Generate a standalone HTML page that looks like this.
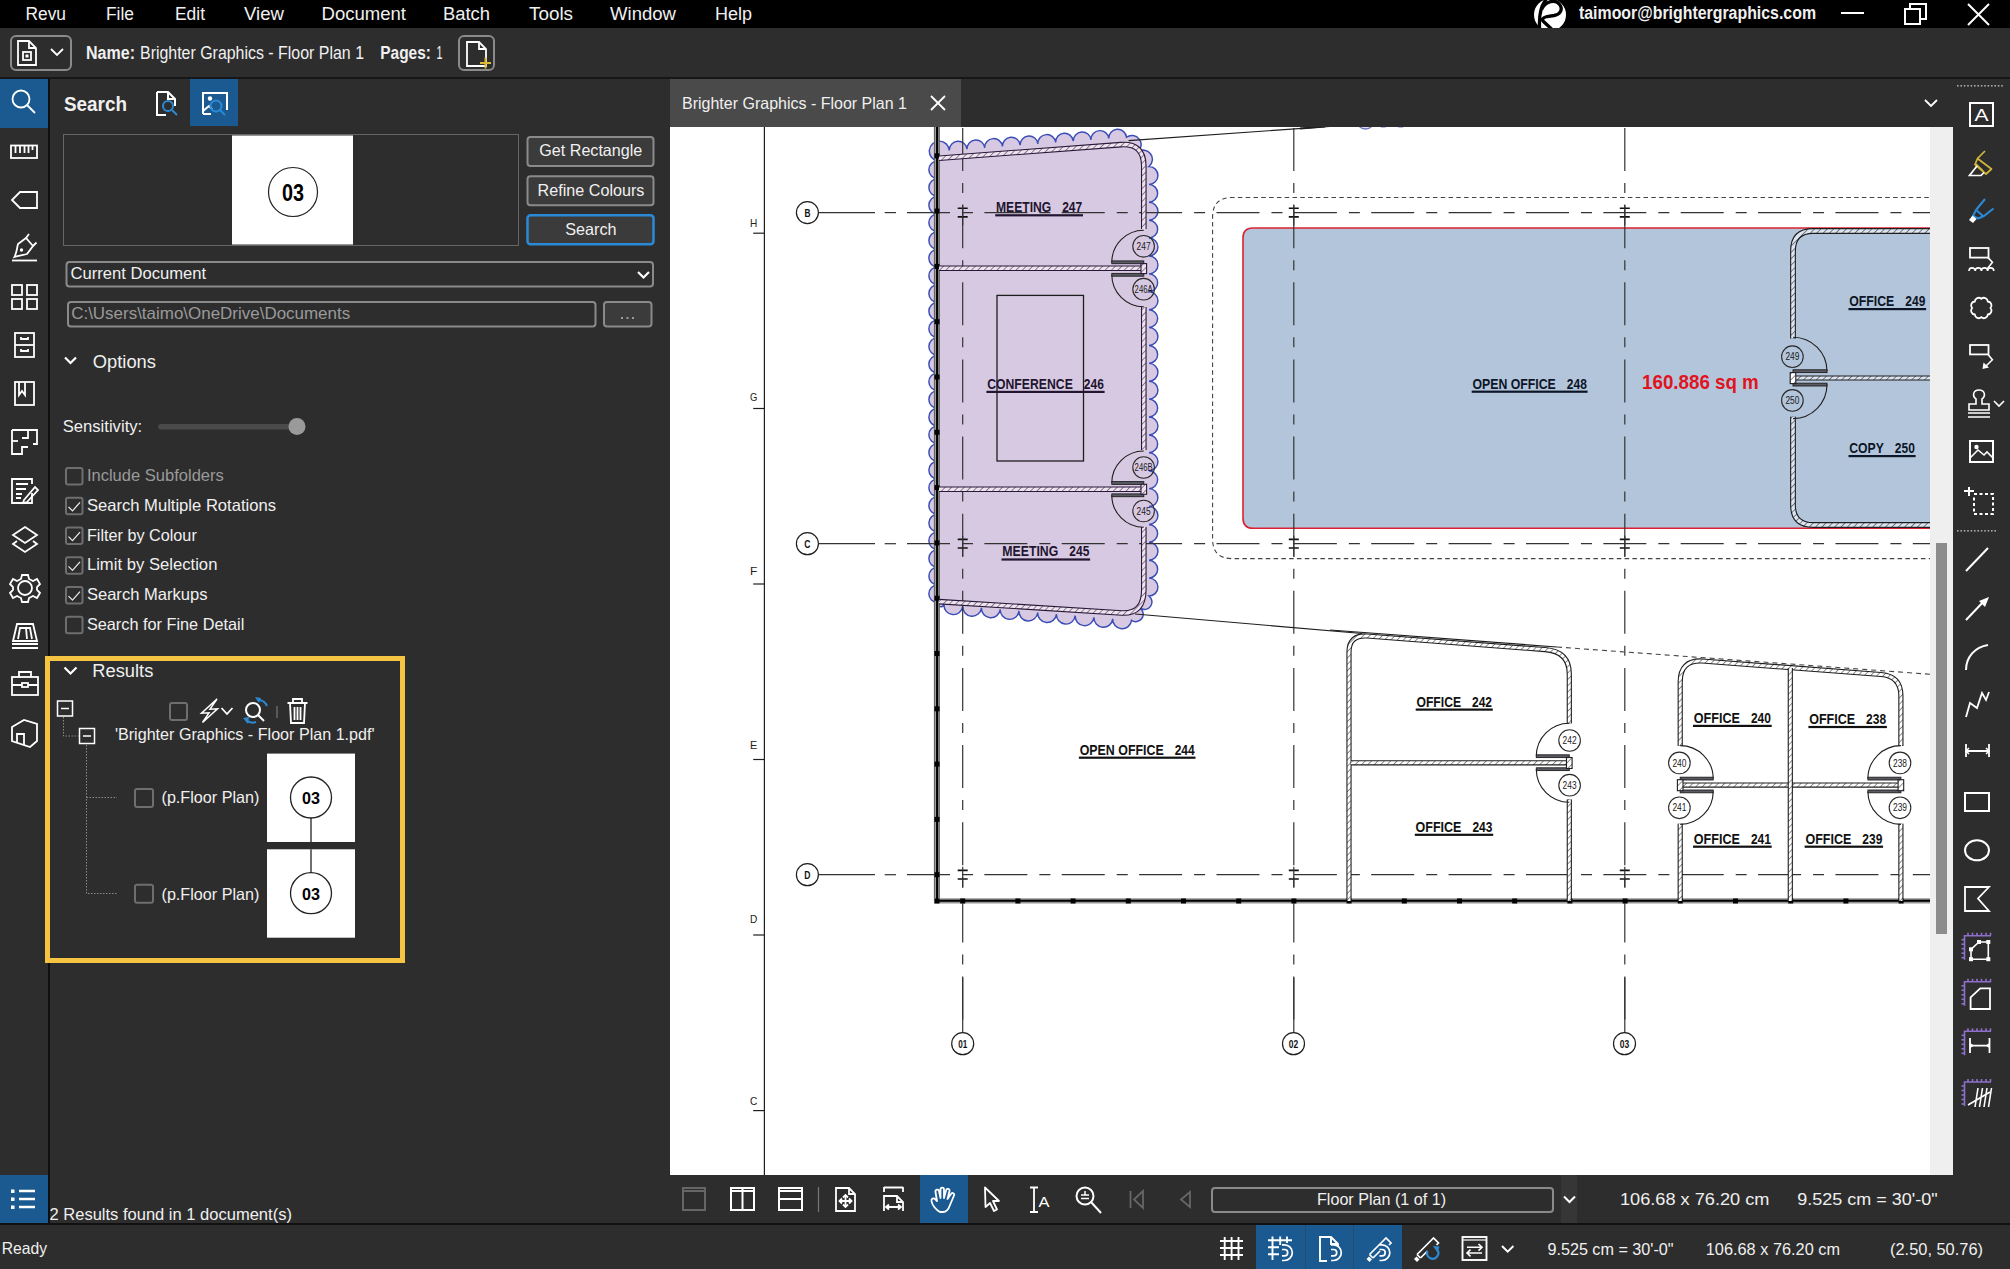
<!DOCTYPE html>
<html><head><meta charset="utf-8"><title>Revu</title><style>
*{margin:0;padding:0;box-sizing:border-box}
html,body{width:2010px;height:1269px;overflow:hidden;background:#2d2d2d;font-family:"Liberation Sans",sans-serif;color:#f0f0f0}
.a{position:absolute}
svg{position:absolute;left:0;top:0;overflow:visible}
text{font-family:"Liberation Sans",sans-serif}
#menubar{left:0;top:0;width:2010px;height:28px;background:#000}
#toolbar{left:0;top:28px;width:2010px;height:49px;background:#2d2d2d}
#sep1{left:0;top:77px;width:2010px;height:2px;background:#171717}
#leftrail{left:0;top:79px;width:48px;height:1144px;background:#2d2d2d}
#railsep{left:48px;top:79px;width:2px;height:1144px;background:#0f0f0f}
#panel{left:50px;top:79px;width:618px;height:1144px;background:#2d2d2d}
#panelsep{left:669px;top:79px;width:1px;height:1144px;background:#050505}
#docarea{left:669px;top:79px;width:1284px;height:1144px;background:#2d2d2d}
#tab{left:670px;top:79px;width:291px;height:48px;background:#4a4a4a}
#page{left:670px;top:127px;width:1260px;height:1048px;background:#fff;overflow:hidden}
#vtrack{left:1930px;top:127px;width:23px;height:1048px;background:#efefef}
#vthumb{left:1936px;top:543px;width:11px;height:391px;background:#8c8c8c}
#rightrail{left:1953px;top:79px;width:57px;height:1144px;background:#2d2d2d}
#statsep{left:0;top:1223px;width:2010px;height:2px;background:#111}
#status{left:0;top:1225px;width:2010px;height:44px;background:#2d2d2d}
.blue{background:#1b5a90}
</style></head><body>
<div id="menubar" class="a"></div>
<div id="toolbar" class="a"></div>
<div id="sep1" class="a"></div>
<div id="leftrail" class="a"></div>
<div id="railsep" class="a"></div>
<div id="panel" class="a"></div>
<div id="panelsep" class="a"></div>
<div id="docarea" class="a"></div>
<div id="tab" class="a"></div>
<div id="vtrack" class="a"></div>
<div id="rightrail" class="a"></div>
<div id="statsep" class="a"></div>
<div id="status" class="a"></div>
<div class="a blue" style="left:0;top:79px;width:48px;height:49px"></div>
<div class="a blue" style="left:0;top:1175px;width:48px;height:48px"></div>
<div class="a blue" style="left:190px;top:79px;width:48px;height:47px"></div>
<div class="a blue" style="left:920px;top:1175px;width:48px;height:48px"></div>
<div class="a blue" style="left:1256px;top:1225px;width:146px;height:44px"></div>
<div class="a" style="left:1305px;top:1225px;width:1px;height:44px;background:#2a4c6a"></div>
<div class="a" style="left:1353px;top:1225px;width:1px;height:44px;background:#2a4c6a"></div>
<div class="a" style="left:1561px;top:1175px;width:16px;height:48px;background:#363636"></div>
<div id="page" class="a"><svg width="1260" height="1048" viewBox="670 127 1260 1048" style="left:0;top:0">
<defs><pattern id="hatch" patternUnits="userSpaceOnUse" width="4.5" height="4.5" patternTransform="rotate(45)"><rect width="4.5" height="4.5" fill="#fff"/><line x1="0" y1="0" x2="0" y2="4.5" stroke="#333" stroke-width="1.1"/></pattern><pattern id="hatchp" patternUnits="userSpaceOnUse" width="4.5" height="4.5" patternTransform="rotate(45)"><rect width="4.5" height="4.5" fill="#eee4f0"/><line x1="0" y1="0" x2="0" y2="4.5" stroke="#3a2a48" stroke-width="1.1"/></pattern><pattern id="hatchb" patternUnits="userSpaceOnUse" width="4.5" height="4.5" patternTransform="rotate(45)"><rect width="4.5" height="4.5" fill="#dde6f0"/><line x1="0" y1="0" x2="0" y2="4.5" stroke="#223" stroke-width="1.1"/></pattern></defs>
<path d="M1960 197.5 H1232 Q1212.6 197.5 1212.6 217 V539 Q1212.6 558.6 1232 558.6 H1960" fill="none" stroke="#444" stroke-width="1.1" stroke-dasharray="4.5 3.3"/>
<path d="M1960 228 H1253 Q1243 228 1243 238 V518 Q1243 528.3 1253 528.3 H1960 Z" fill="#b3c5db" stroke="#dc2230" stroke-width="1.6"/>
<path d="M937.7 161 A10 10 0 1 1 949.30 150.50 A8.89 8.89 0 0 1 967.02 149.17 A8.89 8.89 0 0 1 984.74 147.84 A8.89 8.89 0 0 1 1002.46 146.51 A8.89 8.89 0 0 1 1020.18 145.18 A8.89 8.89 0 0 1 1037.90 143.85 A8.89 8.89 0 0 1 1055.62 142.52 A8.89 8.89 0 0 1 1073.34 141.19 A8.89 8.89 0 0 1 1091.06 139.86 A8.89 8.89 0 0 1 1108.78 138.53 A8.89 8.89 0 0 1 1126.50 137.20 A9.24 9.24 0 0 1 1137.75 151.85 A9.24 9.24 0 0 1 1149.00 166.50 A8.95 8.95 0 0 1 1149.00 184.40 A8.95 8.95 0 0 1 1149.00 202.29 A8.95 8.95 0 0 1 1149.00 220.19 A8.95 8.95 0 0 1 1149.00 238.08 A8.95 8.95 0 0 1 1149.00 255.98 A8.95 8.95 0 0 1 1149.00 273.88 A8.95 8.95 0 0 1 1149.00 291.77 A8.95 8.95 0 0 1 1149.00 309.67 A8.95 8.95 0 0 1 1149.00 327.56 A8.95 8.95 0 0 1 1149.00 345.46 A8.95 8.95 0 0 1 1149.00 363.35 A8.95 8.95 0 0 1 1149.00 381.25 A8.95 8.95 0 0 1 1149.00 399.15 A8.95 8.95 0 0 1 1149.00 417.04 A8.95 8.95 0 0 1 1149.00 434.94 A8.95 8.95 0 0 1 1149.00 452.83 A8.95 8.95 0 0 1 1149.00 470.73 A8.95 8.95 0 0 1 1149.00 488.62 A8.95 8.95 0 0 1 1149.00 506.52 A8.95 8.95 0 0 1 1149.00 524.42 A8.95 8.95 0 0 1 1149.00 542.31 A8.95 8.95 0 0 1 1149.00 560.21 A8.95 8.95 0 0 1 1149.00 578.10 A8.95 8.95 0 0 1 1149.00 596.00 A7.51 7.51 0 0 1 1140.25 608.20 A7.51 7.51 0 0 1 1131.50 620.40 A9.41 9.41 0 0 1 1112.75 618.82 A9.41 9.41 0 0 1 1094.00 617.24 A9.41 9.41 0 0 1 1075.25 615.66 A9.41 9.41 0 0 1 1056.50 614.08 A9.41 9.41 0 0 1 1037.75 612.50 A9.41 9.41 0 0 1 1019.00 610.92 A9.41 9.41 0 0 1 1000.25 609.34 A9.41 9.41 0 0 1 981.50 607.76 A9.41 9.41 0 0 1 962.75 606.18 A9.41 9.41 0 0 1 944.00 604.60 A3.31 3.31 0 0 1 937.70 602.60 A8.83 8.83 0 0 1 937.70 584.94 A8.83 8.83 0 0 1 937.70 567.27 A8.83 8.83 0 0 1 937.70 549.61 A8.83 8.83 0 0 1 937.70 531.94 A8.83 8.83 0 0 1 937.70 514.28 A8.83 8.83 0 0 1 937.70 496.62 A8.83 8.83 0 0 1 937.70 478.95 A8.83 8.83 0 0 1 937.70 461.29 A8.83 8.83 0 0 1 937.70 443.62 A8.83 8.83 0 0 1 937.70 425.96 A8.83 8.83 0 0 1 937.70 408.30 A8.83 8.83 0 0 1 937.70 390.63 A8.83 8.83 0 0 1 937.70 372.97 A8.83 8.83 0 0 1 937.70 355.30 A8.83 8.83 0 0 1 937.70 337.64 A8.83 8.83 0 0 1 937.70 319.98 A8.83 8.83 0 0 1 937.70 302.31 A8.83 8.83 0 0 1 937.70 284.65 A8.83 8.83 0 0 1 937.70 266.98 A8.83 8.83 0 0 1 937.70 249.32 A8.83 8.83 0 0 1 937.70 231.66 A8.83 8.83 0 0 1 937.70 213.99 A8.83 8.83 0 0 1 937.70 196.33 A8.83 8.83 0 0 1 937.70 178.66 A8.83 8.83 0 0 1 937.70 161.00 Z" fill="#d8c9e2" stroke="#3a4db6" stroke-width="1.45"/>
<path d="M1356.5 120 A9 9 0 0 0 1374.5 120 A9 9 0 0 0 1392 120 A9 9 0 0 0 1409.5 120" fill="#e6dcec" stroke="#6a78c0" stroke-width="1.3"/>
<line x1="764.4" y1="120" x2="764.4" y2="1180" stroke="#1e1e1e" stroke-width="1.2"/>
<line x1="753.2" y1="233.2" x2="764.4" y2="233.2" stroke="#1e1e1e" stroke-width="1.2"/>
<text x="750.1" y="226.8" textLength="7.3" lengthAdjust="spacingAndGlyphs" font-size="11.5" font-weight="normal" fill="#222" text-anchor="start" >H</text>
<line x1="753.2" y1="408.5" x2="764.4" y2="408.5" stroke="#1e1e1e" stroke-width="1.2"/>
<text x="750.1" y="400.7" textLength="7.3" lengthAdjust="spacingAndGlyphs" font-size="11.5" font-weight="normal" fill="#222" text-anchor="start" >G</text>
<line x1="753.2" y1="584" x2="764.4" y2="584" stroke="#1e1e1e" stroke-width="1.2"/>
<text x="750.1" y="575" textLength="7.3" lengthAdjust="spacingAndGlyphs" font-size="11.5" font-weight="normal" fill="#222" text-anchor="start" >F</text>
<line x1="753.2" y1="759.5" x2="764.4" y2="759.5" stroke="#1e1e1e" stroke-width="1.2"/>
<text x="750.1" y="748.9" textLength="7.3" lengthAdjust="spacingAndGlyphs" font-size="11.5" font-weight="normal" fill="#222" text-anchor="start" >E</text>
<line x1="753.2" y1="935" x2="764.4" y2="935" stroke="#1e1e1e" stroke-width="1.2"/>
<text x="750.1" y="922.7" textLength="7.3" lengthAdjust="spacingAndGlyphs" font-size="11.5" font-weight="normal" fill="#222" text-anchor="start" >D</text>
<line x1="753.2" y1="1110.6" x2="764.4" y2="1110.6" stroke="#1e1e1e" stroke-width="1.2"/>
<text x="750.1" y="1104.9" textLength="7.3" lengthAdjust="spacingAndGlyphs" font-size="11.5" font-weight="normal" fill="#222" text-anchor="start" >C</text>
<line x1="818.4" y1="212.6" x2="875" y2="212.6" stroke="#333" stroke-width="1.2"/>
<line x1="884.7" y1="212.6" x2="896" y2="212.6" stroke="#333" stroke-width="1.2"/>
<line x1="907" y1="212.6" x2="1935" y2="212.6" stroke="#333" stroke-width="1.2" stroke-dasharray="43 12 11 11.37"/>
<line x1="818.4" y1="543.7" x2="875" y2="543.7" stroke="#333" stroke-width="1.2"/>
<line x1="884.7" y1="543.7" x2="896" y2="543.7" stroke="#333" stroke-width="1.2"/>
<line x1="907" y1="543.7" x2="1935" y2="543.7" stroke="#333" stroke-width="1.2" stroke-dasharray="43 12 11 11.37"/>
<line x1="818.4" y1="874.7" x2="875" y2="874.7" stroke="#333" stroke-width="1.2"/>
<line x1="884.7" y1="874.7" x2="896" y2="874.7" stroke="#333" stroke-width="1.2"/>
<line x1="907" y1="874.7" x2="1935" y2="874.7" stroke="#333" stroke-width="1.2" stroke-dasharray="43 12 11 11.37"/>
<line x1="962.7" y1="50.86" x2="962.7" y2="1020" stroke="#333" stroke-width="1.2" stroke-dasharray="43 12 10 12.14"/>
<line x1="962.7" y1="977.6" x2="962.7" y2="1032.7" stroke="#333" stroke-width="1.2"/>
<line x1="1293.8" y1="50.86" x2="1293.8" y2="1020" stroke="#333" stroke-width="1.2" stroke-dasharray="43 12 10 12.14"/>
<line x1="1293.8" y1="977.6" x2="1293.8" y2="1032.7" stroke="#333" stroke-width="1.2"/>
<line x1="1624.8" y1="50.86" x2="1624.8" y2="1020" stroke="#333" stroke-width="1.2" stroke-dasharray="43 12 10 12.14"/>
<line x1="1624.8" y1="977.6" x2="1624.8" y2="1032.7" stroke="#333" stroke-width="1.2"/>
<path d="M957.7 208.29999999999998 H967.7 M957.7 216.9 H967.7" stroke="#111" stroke-width="1.6"/>
<path d="M962.7 204.6 V225.6" stroke="#333" stroke-width="1.2"/>
<path d="M957.7 539.4000000000001 H967.7 M957.7 548.0 H967.7" stroke="#111" stroke-width="1.6"/>
<path d="M962.7 535.7 V556.7" stroke="#333" stroke-width="1.2"/>
<path d="M957.7 870.4000000000001 H967.7 M957.7 879.0 H967.7" stroke="#111" stroke-width="1.6"/>
<path d="M962.7 866.7 V887.7" stroke="#333" stroke-width="1.2"/>
<path d="M1288.8 208.29999999999998 H1298.8 M1288.8 216.9 H1298.8" stroke="#111" stroke-width="1.6"/>
<path d="M1293.8 204.6 V225.6" stroke="#333" stroke-width="1.2"/>
<path d="M1288.8 539.4000000000001 H1298.8 M1288.8 548.0 H1298.8" stroke="#111" stroke-width="1.6"/>
<path d="M1293.8 535.7 V556.7" stroke="#333" stroke-width="1.2"/>
<path d="M1288.8 870.4000000000001 H1298.8 M1288.8 879.0 H1298.8" stroke="#111" stroke-width="1.6"/>
<path d="M1293.8 866.7 V887.7" stroke="#333" stroke-width="1.2"/>
<path d="M1619.8 208.29999999999998 H1629.8 M1619.8 216.9 H1629.8" stroke="#111" stroke-width="1.6"/>
<path d="M1624.8 204.6 V225.6" stroke="#333" stroke-width="1.2"/>
<path d="M1619.8 539.4000000000001 H1629.8 M1619.8 548.0 H1629.8" stroke="#111" stroke-width="1.6"/>
<path d="M1624.8 535.7 V556.7" stroke="#333" stroke-width="1.2"/>
<path d="M1619.8 870.4000000000001 H1629.8 M1619.8 879.0 H1629.8" stroke="#111" stroke-width="1.6"/>
<path d="M1624.8 866.7 V887.7" stroke="#333" stroke-width="1.2"/>
<circle cx="807.4" cy="212.6" r="11" fill="#fff" stroke="#1e1e1e" stroke-width="1.2"/>
<text x="804.4" y="217.0" textLength="6" lengthAdjust="spacingAndGlyphs" font-size="10.5" font-weight="bold" fill="#111" text-anchor="start" >B</text>
<circle cx="807.4" cy="543.7" r="11" fill="#fff" stroke="#1e1e1e" stroke-width="1.2"/>
<text x="804.3" y="548.1" textLength="6.2" lengthAdjust="spacingAndGlyphs" font-size="10.5" font-weight="bold" fill="#111" text-anchor="start" >C</text>
<circle cx="807.4" cy="874.7" r="11" fill="#fff" stroke="#1e1e1e" stroke-width="1.2"/>
<text x="804.3" y="879.1" textLength="6.2" lengthAdjust="spacingAndGlyphs" font-size="10.5" font-weight="bold" fill="#111" text-anchor="start" >D</text>
<circle cx="962.7" cy="1043.7" r="11" fill="#fff" stroke="#1e1e1e" stroke-width="1.2"/>
<text x="958.2" y="1047.8" textLength="9" lengthAdjust="spacingAndGlyphs" font-size="11.5" font-weight="bold" fill="#111" text-anchor="start" >01</text>
<circle cx="1293.5" cy="1043.7" r="11" fill="#fff" stroke="#1e1e1e" stroke-width="1.2"/>
<text x="1288.8" y="1047.8" textLength="9.4" lengthAdjust="spacingAndGlyphs" font-size="11.5" font-weight="bold" fill="#111" text-anchor="start" >02</text>
<circle cx="1624.5" cy="1043.7" r="11" fill="#fff" stroke="#1e1e1e" stroke-width="1.2"/>
<text x="1619.8" y="1047.8" textLength="9.4" lengthAdjust="spacingAndGlyphs" font-size="11.5" font-weight="bold" fill="#111" text-anchor="start" >03</text>
<path d="M1128.6 140.6 L1330 126.4" stroke="#1e1e1e" stroke-width="1.2"/>
<path d="M1300 128.5 L1325 126.6" stroke="#1e1e1e" stroke-width="2"/>
<path d="M1135 614 L1362 633.5" stroke="#1e1e1e" stroke-width="1.2"/>
<path d="M1330 630 L1557 647" stroke="#1e1e1e" stroke-width="1.2"/>
<path d="M1557 647 L1935 674.6" stroke="#444" stroke-width="1.1" stroke-dasharray="5 4"/>
<path d="M936.8 120 V901" stroke="#a0a0a0" stroke-width="5.6" fill="none"/><path d="M934.4 120 V901 M939.3 120 V901" stroke="#555" stroke-width="0.9" fill="none"/>
<path d="M934 900.8 H1935" stroke="#959595" stroke-width="5.3" fill="none"/>
<path d="M937.1 120 V900.8 H1935" stroke="#000" stroke-width="2.1" fill="none"/>
<g fill="#000"><rect x="934.5" y="872.2" width="5" height="5"/><rect x="934.5" y="816.9" width="5" height="5"/><rect x="934.5" y="761.6" width="5" height="5"/><rect x="934.5" y="706.3" width="5" height="5"/><rect x="934.5" y="651.0" width="5" height="5"/><rect x="934.5" y="595.7" width="5" height="5"/><rect x="934.5" y="540.4" width="5" height="5"/><rect x="934.5" y="485.1" width="5" height="5"/><rect x="934.5" y="429.8" width="5" height="5"/><rect x="934.5" y="374.5" width="5" height="5"/><rect x="934.5" y="319.2" width="5" height="5"/><rect x="934.5" y="263.9" width="5" height="5"/><rect x="934.5" y="208.6" width="5" height="5"/><rect x="934.5" y="153.3" width="5" height="5"/><rect x="960.2" y="898.5" width="5" height="5"/><rect x="1015.4" y="898.5" width="5" height="5"/><rect x="1070.6" y="898.5" width="5" height="5"/><rect x="1125.8" y="898.5" width="5" height="5"/><rect x="1181.0" y="898.5" width="5" height="5"/><rect x="1236.2" y="898.5" width="5" height="5"/><rect x="1291.4" y="898.5" width="5" height="5"/><rect x="1346.6" y="898.5" width="5" height="5"/><rect x="1401.8" y="898.5" width="5" height="5"/><rect x="1457.0" y="898.5" width="5" height="5"/><rect x="1512.2" y="898.5" width="5" height="5"/><rect x="1567.4" y="898.5" width="5" height="5"/><rect x="1622.6" y="898.5" width="5" height="5"/><rect x="1677.8" y="898.5" width="5" height="5"/><rect x="1733.0" y="898.5" width="5" height="5"/><rect x="1788.2" y="898.5" width="5" height="5"/><rect x="1843.4" y="898.5" width="5" height="5"/><rect x="1898.6" y="898.5" width="5" height="5"/><rect x="934.5" y="898.5" width="5" height="5"/></g>
<path d="M939 158.2 L1121 144.6 Q1143.8 143 1143.8 166 V229" fill="none" stroke="#2a1838" stroke-width="5.6" stroke-linejoin="round"/>
<path d="M939 158.2 L1121 144.6 Q1143.8 143 1143.8 166 V229" fill="none" stroke="url(#hatchp)" stroke-width="3.3999999999999995" stroke-linejoin="round"/>
<path d="M1143.8 307 V450" fill="none" stroke="#2a1838" stroke-width="5.6" stroke-linejoin="round"/>
<path d="M1143.8 307 V450" fill="none" stroke="url(#hatchp)" stroke-width="3.3999999999999995" stroke-linejoin="round"/>
<path d="M1143.8 527 V590 Q1143.8 614 1122 613 L939 601.6" fill="none" stroke="#2a1838" stroke-width="5.6" stroke-linejoin="round"/>
<path d="M1143.8 527 V590 Q1143.8 614 1122 613 L939 601.6" fill="none" stroke="url(#hatchp)" stroke-width="3.3999999999999995" stroke-linejoin="round"/>
<path d="M939 268.2 H1146" fill="none" stroke="#2a1838" stroke-width="5.6" stroke-linejoin="round"/>
<path d="M939 268.2 H1146" fill="none" stroke="url(#hatchp)" stroke-width="3.3999999999999995" stroke-linejoin="round"/>
<path d="M939 489.3 H1146" fill="none" stroke="#2a1838" stroke-width="5.6" stroke-linejoin="round"/>
<path d="M939 489.3 H1146" fill="none" stroke="url(#hatchp)" stroke-width="3.3999999999999995" stroke-linejoin="round"/>
<rect x="997" y="295.4" width="86.5" height="165.6" fill="none" stroke="#1e1e1e" stroke-width="1.3"/>
<path d="M1935 231 H1813 Q1793 231 1793 251 V338.6" fill="none" stroke="#1e1e1e" stroke-width="5.8" stroke-linejoin="round"/>
<path d="M1935 231 H1813 Q1793 231 1793 251 V338.6" fill="none" stroke="url(#hatchb)" stroke-width="3.5999999999999996" stroke-linejoin="round"/>
<path d="M1793 416.7 V505 Q1793 525 1813 525 H1935" fill="none" stroke="#1e1e1e" stroke-width="5.8" stroke-linejoin="round"/>
<path d="M1793 416.7 V505 Q1793 525 1813 525 H1935" fill="none" stroke="url(#hatchb)" stroke-width="3.5999999999999996" stroke-linejoin="round"/>
<path d="M1793 378 H1935" fill="none" stroke="#1e1e1e" stroke-width="5.2" stroke-linejoin="round"/>
<path d="M1793 378 H1935" fill="none" stroke="url(#hatchb)" stroke-width="3.0" stroke-linejoin="round"/>
<path d="M1349 901 V652 Q1349 635 1367 636 L1545 649.6 Q1569.3 651.5 1569.3 674 V723.5" fill="none" stroke="#1e1e1e" stroke-width="5.2" stroke-linejoin="round"/>
<path d="M1349 901 V652 Q1349 635 1367 636 L1545 649.6 Q1569.3 651.5 1569.3 674 V723.5" fill="none" stroke="url(#hatch)" stroke-width="3.0" stroke-linejoin="round"/>
<path d="M1569.3 799.4 V901" fill="none" stroke="#1e1e1e" stroke-width="5.2" stroke-linejoin="round"/>
<path d="M1569.3 799.4 V901" fill="none" stroke="url(#hatch)" stroke-width="3.0" stroke-linejoin="round"/>
<path d="M1351 762.8 H1569.3" fill="none" stroke="#1e1e1e" stroke-width="5.2" stroke-linejoin="round"/>
<path d="M1351 762.8 H1569.3" fill="none" stroke="url(#hatch)" stroke-width="3.0" stroke-linejoin="round"/>
<path d="M1680.2 901 V823.7" fill="none" stroke="#1e1e1e" stroke-width="5.2" stroke-linejoin="round"/>
<path d="M1680.2 901 V823.7" fill="none" stroke="url(#hatch)" stroke-width="3.0" stroke-linejoin="round"/>
<path d="M1680.2 746 V682 Q1680.2 660 1702 661 L1881 674.5 Q1900.9 676 1900.9 696 V746" fill="none" stroke="#1e1e1e" stroke-width="5.2" stroke-linejoin="round"/>
<path d="M1680.2 746 V682 Q1680.2 660 1702 661 L1881 674.5 Q1900.9 676 1900.9 696 V746" fill="none" stroke="url(#hatch)" stroke-width="3.0" stroke-linejoin="round"/>
<path d="M1900.9 823.7 V901" fill="none" stroke="#1e1e1e" stroke-width="5.2" stroke-linejoin="round"/>
<path d="M1900.9 823.7 V901" fill="none" stroke="url(#hatch)" stroke-width="3.0" stroke-linejoin="round"/>
<path d="M1680.2 785.1 H1900.9" fill="none" stroke="#1e1e1e" stroke-width="5.2" stroke-linejoin="round"/>
<path d="M1680.2 785.1 H1900.9" fill="none" stroke="url(#hatch)" stroke-width="3.0" stroke-linejoin="round"/>
<path d="M1790.3 668 V901" fill="none" stroke="#1e1e1e" stroke-width="5.2" stroke-linejoin="round"/>
<path d="M1790.3 668 V901" fill="none" stroke="url(#hatch)" stroke-width="3.0" stroke-linejoin="round"/>
<path d="M1111.8 262.3 A32 32 0 0 1 1143.8 230.3" fill="none" stroke="#1e1e1e" stroke-width="1.1"/>
<rect x="1111.8" y="260.90000000000003" width="32" height="2.8" fill="#5a5a64" stroke="#1e1e1e" stroke-width="0.9"/>
<path d="M1111.8 274.8 A32 32 0 0 0 1143.8 306.8" fill="none" stroke="#1e1e1e" stroke-width="1.1"/>
<rect x="1111.8" y="273.40000000000003" width="32" height="2.8" fill="#5a5a64" stroke="#1e1e1e" stroke-width="0.9"/>
<path d="M1111.8 483 A32 32 0 0 1 1143.8 451" fill="none" stroke="#1e1e1e" stroke-width="1.1"/>
<rect x="1111.8" y="481.6" width="32" height="2.8" fill="#5a5a64" stroke="#1e1e1e" stroke-width="0.9"/>
<path d="M1111.8 495.3 A32 32 0 0 0 1143.8 527.3" fill="none" stroke="#1e1e1e" stroke-width="1.1"/>
<rect x="1111.8" y="493.90000000000003" width="32" height="2.8" fill="#5a5a64" stroke="#1e1e1e" stroke-width="0.9"/>
<path d="M1827 371.2 A34 34 0 0 0 1793 337.2" fill="none" stroke="#1e1e1e" stroke-width="1.1"/>
<rect x="1793" y="369.8" width="34" height="2.8" fill="#5a5a64" stroke="#1e1e1e" stroke-width="0.9"/>
<path d="M1827 384.6 A34 34 0 0 1 1793 418.6" fill="none" stroke="#1e1e1e" stroke-width="1.1"/>
<rect x="1793" y="383.20000000000005" width="34" height="2.8" fill="#5a5a64" stroke="#1e1e1e" stroke-width="0.9"/>
<path d="M1536.3 756.2 A33 33 0 0 1 1569.3 723.2" fill="none" stroke="#1e1e1e" stroke-width="1.1"/>
<rect x="1536.3" y="754.8000000000001" width="33" height="2.8" fill="#5a5a64" stroke="#1e1e1e" stroke-width="0.9"/>
<path d="M1536.3 769.2 A33 33 0 0 0 1569.3 802.2" fill="none" stroke="#1e1e1e" stroke-width="1.1"/>
<rect x="1536.3" y="767.8000000000001" width="33" height="2.8" fill="#5a5a64" stroke="#1e1e1e" stroke-width="0.9"/>
<path d="M1713.2 778.6 A33 33 0 0 0 1680.2 745.6" fill="none" stroke="#1e1e1e" stroke-width="1.1"/>
<rect x="1680.2" y="777.2" width="33" height="2.8" fill="#5a5a64" stroke="#1e1e1e" stroke-width="0.9"/>
<path d="M1713.2 791.4 A33 33 0 0 1 1680.2 824.4" fill="none" stroke="#1e1e1e" stroke-width="1.1"/>
<rect x="1680.2" y="790.0" width="33" height="2.8" fill="#5a5a64" stroke="#1e1e1e" stroke-width="0.9"/>
<path d="M1867.9 778.6 A33 33 0 0 1 1900.9 745.6" fill="none" stroke="#1e1e1e" stroke-width="1.1"/>
<rect x="1867.9" y="777.2" width="33" height="2.8" fill="#5a5a64" stroke="#1e1e1e" stroke-width="0.9"/>
<path d="M1867.9 791.4 A33 33 0 0 0 1900.9 824.4" fill="none" stroke="#1e1e1e" stroke-width="1.1"/>
<rect x="1867.9" y="790.0" width="33" height="2.8" fill="#5a5a64" stroke="#1e1e1e" stroke-width="0.9"/>
<rect x="1790.2" y="372.6" width="5.6" height="11" fill="url(#hatch)" stroke="#1e1e1e" stroke-width="1.1"/>
<rect x="1566.5" y="757.5" width="5.6" height="11" fill="url(#hatch)" stroke="#1e1e1e" stroke-width="1.1"/>
<rect x="1677.4" y="779.7" width="5.6" height="11" fill="url(#hatch)" stroke="#1e1e1e" stroke-width="1.1"/>
<rect x="1898.1" y="779.7" width="5.6" height="11" fill="url(#hatch)" stroke="#1e1e1e" stroke-width="1.1"/>
<rect x="1141" y="263.6" width="5.6" height="10" fill="url(#hatchp)" stroke="#2a1838" stroke-width="1.1"/>
<rect x="1141" y="484.3" width="5.6" height="10" fill="url(#hatchp)" stroke="#2a1838" stroke-width="1.1"/>
<circle cx="1143.6" cy="246.3" r="10.8" fill="none" stroke="#2a2a2a" stroke-width="1.1"/>
<text x="1136.6" y="249.9" textLength="14" lengthAdjust="spacingAndGlyphs" font-size="10.5" font-weight="normal" fill="#1a1a1a" text-anchor="start" >247</text>
<circle cx="1143.6" cy="289.2" r="10.8" fill="none" stroke="#2a2a2a" stroke-width="1.1"/>
<text x="1134.6" y="292.8" textLength="18" lengthAdjust="spacingAndGlyphs" font-size="10.5" font-weight="normal" fill="#1a1a1a" text-anchor="start" >246A</text>
<circle cx="1143.6" cy="467.5" r="10.8" fill="none" stroke="#2a2a2a" stroke-width="1.1"/>
<text x="1134.6" y="471.1" textLength="18" lengthAdjust="spacingAndGlyphs" font-size="10.5" font-weight="normal" fill="#1a1a1a" text-anchor="start" >246B</text>
<circle cx="1143.6" cy="511" r="10.8" fill="none" stroke="#2a2a2a" stroke-width="1.1"/>
<text x="1136.6" y="514.6" textLength="14" lengthAdjust="spacingAndGlyphs" font-size="10.5" font-weight="normal" fill="#1a1a1a" text-anchor="start" >245</text>
<circle cx="1792.4" cy="356.7" r="10.8" fill="none" stroke="#2a2a2a" stroke-width="1.1"/>
<text x="1785.4" y="360.3" textLength="14" lengthAdjust="spacingAndGlyphs" font-size="10.5" font-weight="normal" fill="#1a1a1a" text-anchor="start" >249</text>
<circle cx="1792.4" cy="400.4" r="10.8" fill="none" stroke="#2a2a2a" stroke-width="1.1"/>
<text x="1785.4" y="404.0" textLength="14" lengthAdjust="spacingAndGlyphs" font-size="10.5" font-weight="normal" fill="#1a1a1a" text-anchor="start" >250</text>
<circle cx="1569.6" cy="740.5" r="10.8" fill="none" stroke="#2a2a2a" stroke-width="1.1"/>
<text x="1562.6" y="744.1" textLength="14" lengthAdjust="spacingAndGlyphs" font-size="10.5" font-weight="normal" fill="#1a1a1a" text-anchor="start" >242</text>
<circle cx="1569.6" cy="785.2" r="10.8" fill="none" stroke="#2a2a2a" stroke-width="1.1"/>
<text x="1562.6" y="788.8000000000001" textLength="14" lengthAdjust="spacingAndGlyphs" font-size="10.5" font-weight="normal" fill="#1a1a1a" text-anchor="start" >243</text>
<circle cx="1679.4" cy="762.9" r="10.8" fill="none" stroke="#2a2a2a" stroke-width="1.1"/>
<text x="1672.4" y="766.5" textLength="14" lengthAdjust="spacingAndGlyphs" font-size="10.5" font-weight="normal" fill="#1a1a1a" text-anchor="start" >240</text>
<circle cx="1679.4" cy="807.8" r="10.8" fill="none" stroke="#2a2a2a" stroke-width="1.1"/>
<text x="1672.4" y="811.4" textLength="14" lengthAdjust="spacingAndGlyphs" font-size="10.5" font-weight="normal" fill="#1a1a1a" text-anchor="start" >241</text>
<circle cx="1900" cy="762.9" r="10.8" fill="none" stroke="#2a2a2a" stroke-width="1.1"/>
<text x="1893.0" y="766.5" textLength="14" lengthAdjust="spacingAndGlyphs" font-size="10.5" font-weight="normal" fill="#1a1a1a" text-anchor="start" >238</text>
<circle cx="1900" cy="807.8" r="10.8" fill="none" stroke="#2a2a2a" stroke-width="1.1"/>
<text x="1893.0" y="811.4" textLength="14" lengthAdjust="spacingAndGlyphs" font-size="10.5" font-weight="normal" fill="#1a1a1a" text-anchor="start" >239</text>
<text x="996" y="212.2" textLength="55.200000000000045" lengthAdjust="spacingAndGlyphs" font-size="15.4" font-weight="bold" fill="#221530" text-anchor="start" >MEETING</text>
<text x="1062.2" y="212.2" textLength="20" lengthAdjust="spacingAndGlyphs" font-size="15.4" font-weight="bold" fill="#221530" text-anchor="start" >247</text>
<rect x="995.2" y="214.2" width="87.80000000000004" height="2.2" fill="#221530"/>
<text x="987.2" y="388.8" textLength="85.59999999999991" lengthAdjust="spacingAndGlyphs" font-size="15.4" font-weight="bold" fill="#221530" text-anchor="start" >CONFERENCE</text>
<text x="1083.8" y="388.8" textLength="20" lengthAdjust="spacingAndGlyphs" font-size="15.4" font-weight="bold" fill="#221530" text-anchor="start" >246</text>
<rect x="986.4000000000001" y="390.8" width="118.1999999999999" height="2.2" fill="#221530"/>
<text x="1002.3" y="556.4" textLength="56.0" lengthAdjust="spacingAndGlyphs" font-size="15.4" font-weight="bold" fill="#221530" text-anchor="start" >MEETING</text>
<text x="1069.3" y="556.4" textLength="20" lengthAdjust="spacingAndGlyphs" font-size="15.4" font-weight="bold" fill="#221530" text-anchor="start" >245</text>
<rect x="1001.5" y="558.4" width="88.6" height="2.2" fill="#221530"/>
<text x="1472.5" y="388.6" textLength="83.29999999999995" lengthAdjust="spacingAndGlyphs" font-size="15.4" font-weight="bold" fill="#0c1626" text-anchor="start" >OPEN OFFICE</text>
<text x="1566.8" y="388.6" textLength="20" lengthAdjust="spacingAndGlyphs" font-size="15.4" font-weight="bold" fill="#0c1626" text-anchor="start" >248</text>
<rect x="1471.7" y="390.6" width="115.89999999999995" height="2.2" fill="#0c1626"/>
<text x="1849.3" y="306" textLength="45.0" lengthAdjust="spacingAndGlyphs" font-size="15.4" font-weight="bold" fill="#0c1626" text-anchor="start" >OFFICE</text>
<text x="1905.3" y="306" textLength="20" lengthAdjust="spacingAndGlyphs" font-size="15.4" font-weight="bold" fill="#0c1626" text-anchor="start" >249</text>
<rect x="1848.5" y="308" width="77.6" height="2.2" fill="#0c1626"/>
<text x="1849.3" y="453" textLength="34.5" lengthAdjust="spacingAndGlyphs" font-size="15.4" font-weight="bold" fill="#0c1626" text-anchor="start" >COPY</text>
<text x="1894.8" y="453" textLength="20" lengthAdjust="spacingAndGlyphs" font-size="15.4" font-weight="bold" fill="#0c1626" text-anchor="start" >250</text>
<rect x="1848.5" y="455" width="67.1" height="2.2" fill="#0c1626"/>
<text x="1079.7" y="754.6" textLength="84.0" lengthAdjust="spacingAndGlyphs" font-size="15.4" font-weight="bold" fill="#111" text-anchor="start" >OPEN OFFICE</text>
<text x="1174.7" y="754.6" textLength="20" lengthAdjust="spacingAndGlyphs" font-size="15.4" font-weight="bold" fill="#111" text-anchor="start" >244</text>
<rect x="1078.9" y="756.6" width="116.6" height="2.2" fill="#111"/>
<text x="1416.5" y="706.5" textLength="44.5" lengthAdjust="spacingAndGlyphs" font-size="15.4" font-weight="bold" fill="#111" text-anchor="start" >OFFICE</text>
<text x="1472" y="706.5" textLength="20" lengthAdjust="spacingAndGlyphs" font-size="15.4" font-weight="bold" fill="#111" text-anchor="start" >242</text>
<rect x="1415.7" y="708.5" width="77.1" height="2.2" fill="#111"/>
<text x="1415.6" y="831.7" textLength="45.80000000000018" lengthAdjust="spacingAndGlyphs" font-size="15.4" font-weight="bold" fill="#111" text-anchor="start" >OFFICE</text>
<text x="1472.4" y="831.7" textLength="20" lengthAdjust="spacingAndGlyphs" font-size="15.4" font-weight="bold" fill="#111" text-anchor="start" >243</text>
<rect x="1414.8" y="833.7" width="78.40000000000018" height="2.2" fill="#111"/>
<text x="1693.8" y="722.8" textLength="46.100000000000136" lengthAdjust="spacingAndGlyphs" font-size="15.4" font-weight="bold" fill="#111" text-anchor="start" >OFFICE</text>
<text x="1750.9" y="722.8" textLength="20" lengthAdjust="spacingAndGlyphs" font-size="15.4" font-weight="bold" fill="#111" text-anchor="start" >240</text>
<rect x="1693.0" y="724.8" width="78.70000000000013" height="2.2" fill="#111"/>
<text x="1809.2" y="723.9" textLength="45.899999999999864" lengthAdjust="spacingAndGlyphs" font-size="15.4" font-weight="bold" fill="#111" text-anchor="start" >OFFICE</text>
<text x="1866.1" y="723.9" textLength="20" lengthAdjust="spacingAndGlyphs" font-size="15.4" font-weight="bold" fill="#111" text-anchor="start" >238</text>
<rect x="1808.4" y="725.9" width="78.49999999999986" height="2.2" fill="#111"/>
<text x="1693.8" y="843.6" textLength="46.100000000000136" lengthAdjust="spacingAndGlyphs" font-size="15.4" font-weight="bold" fill="#111" text-anchor="start" >OFFICE</text>
<text x="1750.9" y="843.6" textLength="20" lengthAdjust="spacingAndGlyphs" font-size="15.4" font-weight="bold" fill="#111" text-anchor="start" >241</text>
<rect x="1693.0" y="845.6" width="78.70000000000013" height="2.2" fill="#111"/>
<text x="1805.4" y="843.6" textLength="45.899999999999864" lengthAdjust="spacingAndGlyphs" font-size="15.4" font-weight="bold" fill="#111" text-anchor="start" >OFFICE</text>
<text x="1862.3" y="843.6" textLength="20" lengthAdjust="spacingAndGlyphs" font-size="15.4" font-weight="bold" fill="#111" text-anchor="start" >239</text>
<rect x="1804.6000000000001" y="845.6" width="78.49999999999986" height="2.2" fill="#111"/>
<text x="1642.1" y="388.9" textLength="116.7" lengthAdjust="spacingAndGlyphs" font-size="20.5" font-weight="bold" fill="#e0141e" text-anchor="start" >160.886 sq m</text>
</svg></div>
<div id="vthumb" class="a"></div>
<svg width="2010" height="1269">
<text x="25.5" y="19.5" textLength="40.5" lengthAdjust="spacingAndGlyphs" font-size="18" font-weight="normal" fill="#f0f0f0" text-anchor="start" >Revu</text>
<text x="106" y="19.5" textLength="28" lengthAdjust="spacingAndGlyphs" font-size="18" font-weight="normal" fill="#f0f0f0" text-anchor="start" >File</text>
<text x="175" y="19.5" textLength="30" lengthAdjust="spacingAndGlyphs" font-size="18" font-weight="normal" fill="#f0f0f0" text-anchor="start" >Edit</text>
<text x="244" y="19.5" textLength="40" lengthAdjust="spacingAndGlyphs" font-size="18" font-weight="normal" fill="#f0f0f0" text-anchor="start" >View</text>
<text x="321.5" y="19.5" textLength="84.5" lengthAdjust="spacingAndGlyphs" font-size="18" font-weight="normal" fill="#f0f0f0" text-anchor="start" >Document</text>
<text x="443" y="19.5" textLength="47" lengthAdjust="spacingAndGlyphs" font-size="18" font-weight="normal" fill="#f0f0f0" text-anchor="start" >Batch</text>
<text x="529" y="19.5" textLength="44" lengthAdjust="spacingAndGlyphs" font-size="18" font-weight="normal" fill="#f0f0f0" text-anchor="start" >Tools</text>
<text x="610" y="19.5" textLength="66" lengthAdjust="spacingAndGlyphs" font-size="18" font-weight="normal" fill="#f0f0f0" text-anchor="start" >Window</text>
<text x="715" y="19.5" textLength="37" lengthAdjust="spacingAndGlyphs" font-size="18" font-weight="normal" fill="#f0f0f0" text-anchor="start" >Help</text>
<text x="1579" y="18.6" textLength="237" lengthAdjust="spacingAndGlyphs" font-size="18" font-weight="bold" fill="#f0f0f0" text-anchor="start" >taimoor@brightergraphics.com</text>
<clipPath id="lc"><rect x="1520" y="0" width="60" height="28"/></clipPath><g clip-path="url(#lc)"><circle cx="1550" cy="14.8" r="16" fill="#fff"/><path d="M1546.5 -1 Q1538.3 8 1539.6 29" fill="none" stroke="#000" stroke-width="3.3"/><path d="M1541.5 9.5 C1545 1 1556 -1.5 1560 5 C1563 10 1560 14.5 1554 15.5 L1547 16.5 C1542.5 17.5 1541.5 19.5 1543.5 21.5 L1551.5 29" fill="none" stroke="#000" stroke-width="3.3"/></g>
<g stroke="#fff" stroke-width="2" fill="none"><line x1="1841" y1="13" x2="1864" y2="13"/><rect x="1905" y="9" width="15" height="15"/><path d="M1910 9 V4 H1926 V19 H1920"/><line x1="1968" y1="4" x2="1989" y2="25"/><line x1="1989" y1="4" x2="1968" y2="25"/></g>
<g fill="none" stroke="#8a8a8a" stroke-width="2"><rect x="11" y="36" width="60" height="34" rx="5"/><rect x="459" y="36" width="35" height="34" rx="5"/></g>
<g fill="none" stroke="#fff" stroke-width="1.8"><path d="M18 41 H29 L36 48 V65 H18 Z"/><path d="M29 41 V48 H36"/><rect x="23" y="52" width="8" height="8"/><path d="M51 49 L57 55 L63 49"/><path d="M467 42 H479 L486 49 V66 H467 Z"/><path d="M479 42 V49 H486"/></g><rect x="25.5" y="54.5" width="3" height="3" fill="#fff"/><g stroke="#d9b937" stroke-width="2"><line x1="480" y1="63" x2="491" y2="63"/><line x1="485.5" y1="57.5" x2="485.5" y2="68.5"/></g>
<text x="86" y="58.7" textLength="49" lengthAdjust="spacingAndGlyphs" font-size="17.5" font-weight="bold" fill="#f0f0f0" text-anchor="start" >Name:</text>
<text x="140" y="58.7" textLength="224" lengthAdjust="spacingAndGlyphs" font-size="17.5" font-weight="normal" fill="#f0f0f0" text-anchor="start" >Brighter Graphics - Floor Plan 1</text>
<text x="380.3" y="58.7" textLength="50.6" lengthAdjust="spacingAndGlyphs" font-size="17.5" font-weight="bold" fill="#f0f0f0" text-anchor="start" >Pages:</text>
<text x="436.5" y="58.7" textLength="6" lengthAdjust="spacingAndGlyphs" font-size="17.5" font-weight="normal" fill="#f0f0f0" text-anchor="start" >1</text>
<g fill="none" stroke="#fff" stroke-width="1.8"><circle cx="21" cy="99" r="8.5"/><line x1="27" y1="105" x2="35" y2="113"/><rect x="11" y="145.5" width="26" height="12.5"/><path d="M15.5 145v8M20 145v8M24.5 145v8M28.5 145v8M32.5 145v5"/><path d="M37 192 H20 L12 200 L20 208 H37 Z"/><path d="M12 260.5 H37"/><path d="M14.5 257 C17 252 17 247 18 244 L26 238 L33 246 L27 254 C24 255 19 255.5 14.5 257 Z"/><path d="M26 238 L29 234 M33 246 L36.5 242.5"/><circle cx="21.5" cy="250" r="0.8" fill="#fff"/><rect x="12" y="285" width="10" height="10"/><rect x="27" y="285" width="10" height="10"/><rect x="12" y="299" width="10" height="10"/><rect x="27" y="299" width="10" height="10"/><rect x="15" y="333" width="19" height="24"/><line x1="15" y1="345" x2="34" y2="345"/><path d="M21 337 v2 h7 v-2 M21 349 v2 h7 v-2"/><rect x="15" y="382" width="19" height="23"/><path d="M19 382 V395 L22 391 L25 395 V382"/><path d="M12 430 H37 V444 H33"/><path d="M28 430 V438 H22"/><path d="M12 430 V454 H22 V447 H28"/><path d="M12 441 H18"/><path d="M32 493 V503 H12 V479 H32 V484"/><path d="M16 484 H28 M16 489 H26 M16 494 H22 M16 498 H21"/><path d="M24 500 L35 487 L38 490 L27 502 L23 503 Z"/><path d="M25 527 L37 535 L25 543 L13 535 Z"/><path d="M17 541 L13 544 L25 552 L37 544 L33 541"/><circle cx="25" cy="588" r="7"/><path d="M22 575 H28 L29 579 L33 581 L37 579 L40 584 L37 587 V590 L40 593 L37 598 L33 596 L29 598 L28 602 H22 L21 598 L17 596 L13 598 L10 593 L13 590 V587 L10 584 L13 579 L17 581 L21 579 Z"/><path d="M13 641 L17 624 H33 L37 641 Z"/><path d="M18 639 L20 628 H30 L32 639"/><line x1="26" y1="628" x2="27" y2="639"/><path d="M12 644 H38 M12 648 H38"/><rect x="12" y="677" width="26" height="18"/><path d="M19 677 V672 H31 V677"/><path d="M12 685 H22 M28 685 H38"/><rect x="22" y="683" width="6" height="4"/><path d="M12 727 L24 720 L37 724 V741 L30 747 L12 741 Z"/><path d="M17 743 V734 H24 V745"/><path d="M19 1191 H35 M19 1199 H35 M19 1207 H35" stroke-width="2.5"/></g><g fill="#fff"><rect x="11" y="1189.5" width="3.5" height="3.5"/><rect x="11" y="1197.5" width="3.5" height="3.5"/><rect x="11" y="1205.5" width="3.5" height="3.5"/></g>
<text x="64" y="111" textLength="63" lengthAdjust="spacingAndGlyphs" font-size="21" font-weight="bold" fill="#f0f0f0" text-anchor="start" >Search</text>
<g fill="none" stroke="#fff" stroke-width="2"><path d="M157 92 H168 L175 99 V106 M166 115 H157 Z"/><path d="M157 92 V115 H166"/><path d="M168 92 V99 H175"/><path d="M203 114 V93 H227 V110"/><path d="M203 111 L209 106 L212 109" /><path d="M203 114 H211"/></g><circle cx="210" cy="98.5" r="2.2" fill="#fff"/><g fill="none" stroke="#2b8ad6" stroke-width="2"><circle cx="168" cy="106" r="5"/><line x1="172" y1="110" x2="177" y2="115"/><circle cx="216" cy="106" r="5.5"/><line x1="220" y1="110" x2="225" y2="115"/></g>
<rect x="63.5" y="134.5" width="455" height="111" fill="none" stroke="#666" stroke-width="1"/>
<rect x="232" y="135.5" width="121" height="109" fill="#fff"/>
<circle cx="293" cy="192" r="24.5" fill="none" stroke="#222" stroke-width="1.2"/>
<text x="282" y="201.4" textLength="22" lengthAdjust="spacingAndGlyphs" font-size="24" font-weight="bold" fill="#000" text-anchor="start" >03</text>
<rect x="527.5" y="137" width="126" height="29" rx="3" fill="#3b3b3b" stroke="#8a8a8a" stroke-width="2"/>
<text x="539.3" y="156.2" textLength="103" lengthAdjust="spacingAndGlyphs" font-size="16.5" font-weight="normal" fill="#f0f0f0" text-anchor="start" >Get Rectangle</text>
<rect x="527.5" y="176.3" width="126" height="29" rx="3" fill="#3b3b3b" stroke="#8a8a8a" stroke-width="2"/>
<text x="537.6" y="195.5" textLength="106.8" lengthAdjust="spacingAndGlyphs" font-size="16.5" font-weight="normal" fill="#f0f0f0" text-anchor="start" >Refine Colours</text>
<rect x="527.5" y="215.3" width="126" height="29" rx="3" fill="#3b3b3b" stroke="#2b8ad6" stroke-width="2.5"/>
<text x="565.3" y="234.5" textLength="51.3" lengthAdjust="spacingAndGlyphs" font-size="16.5" font-weight="normal" fill="#f0f0f0" text-anchor="start" >Search</text>
<rect x="66.5" y="262" width="586.5" height="24.5" rx="3" fill="none" stroke="#8a8a8a" stroke-width="2"/>
<text x="70.4" y="279" textLength="135.8" lengthAdjust="spacingAndGlyphs" font-size="16.5" font-weight="normal" fill="#f0f0f0" text-anchor="start" >Current Document</text>
<path d="M638 272 L643.5 277.5 L649 272" fill="none" stroke="#fff" stroke-width="2.2"/>
<rect x="68" y="302" width="527.5" height="24.5" rx="3" fill="none" stroke="#8a8a8a" stroke-width="2"/>
<text x="71.2" y="318.6" textLength="279" lengthAdjust="spacingAndGlyphs" font-size="16.5" font-weight="normal" fill="#9a9a9a" text-anchor="start" >C:\Users\taimo\OneDrive\Documents</text>
<rect x="604" y="302" width="47.5" height="24.5" rx="3" fill="#3b3b3b" stroke="#8a8a8a" stroke-width="2"/>
<g fill="#9a9a9a"><rect x="621" y="317" width="2" height="2"/><rect x="626.5" y="317" width="2" height="2"/><rect x="632" y="317" width="2" height="2"/></g>
<path d="M65 357.5 L70.5 363 L76 357.5" fill="none" stroke="#fff" stroke-width="2.2"/>
<text x="92.8" y="368" textLength="63.2" lengthAdjust="spacingAndGlyphs" font-size="18" font-weight="normal" fill="#f0f0f0" text-anchor="start" >Options</text>
<text x="62.7" y="432" textLength="79.5" lengthAdjust="spacingAndGlyphs" font-size="16.5" font-weight="normal" fill="#f0f0f0" text-anchor="start" >Sensitivity:</text>
<rect x="158" y="424" width="142" height="5.5" rx="2.75" fill="#4a4a4a"/>
<circle cx="297" cy="426.6" r="8.5" fill="#9a9a9a"/>
<rect x="66" y="468.1" width="16.5" height="16.5" rx="2" fill="none" stroke="#6e6e6e" stroke-width="2"/>
<text x="86.9" y="481.0" textLength="136.9" lengthAdjust="spacingAndGlyphs" font-size="16.5" font-weight="normal" fill="#9a9a9a" text-anchor="start" >Include Subfolders</text>
<rect x="66" y="497.85" width="16.5" height="16.5" rx="2" fill="none" stroke="#6e6e6e" stroke-width="2"/>
<path d="M68.5 506.85 L72.5 510.85 L80 502.35" fill="none" stroke="#e8e8e8" stroke-width="1.3"/>
<text x="86.9" y="510.75" textLength="189.1" lengthAdjust="spacingAndGlyphs" font-size="16.5" font-weight="normal" fill="#f0f0f0" text-anchor="start" >Search Multiple Rotations</text>
<rect x="66" y="527.6" width="16.5" height="16.5" rx="2" fill="none" stroke="#6e6e6e" stroke-width="2"/>
<path d="M68.5 536.6 L72.5 540.6 L80 532.1" fill="none" stroke="#e8e8e8" stroke-width="1.3"/>
<text x="86.9" y="540.5" textLength="109.9" lengthAdjust="spacingAndGlyphs" font-size="16.5" font-weight="normal" fill="#f0f0f0" text-anchor="start" >Filter by Colour</text>
<rect x="66" y="557.35" width="16.5" height="16.5" rx="2" fill="none" stroke="#6e6e6e" stroke-width="2"/>
<path d="M68.5 566.35 L72.5 570.35 L80 561.85" fill="none" stroke="#e8e8e8" stroke-width="1.3"/>
<text x="86.9" y="570.25" textLength="130.5" lengthAdjust="spacingAndGlyphs" font-size="16.5" font-weight="normal" fill="#f0f0f0" text-anchor="start" >Limit by Selection</text>
<rect x="66" y="587.1" width="16.5" height="16.5" rx="2" fill="none" stroke="#6e6e6e" stroke-width="2"/>
<path d="M68.5 596.1 L72.5 600.1 L80 591.6" fill="none" stroke="#e8e8e8" stroke-width="1.3"/>
<text x="86.9" y="600.0" textLength="120.6" lengthAdjust="spacingAndGlyphs" font-size="16.5" font-weight="normal" fill="#f0f0f0" text-anchor="start" >Search Markups</text>
<rect x="66" y="616.85" width="16.5" height="16.5" rx="2" fill="none" stroke="#6e6e6e" stroke-width="2"/>
<text x="86.9" y="629.75" textLength="157.4" lengthAdjust="spacingAndGlyphs" font-size="16.5" font-weight="normal" fill="#f0f0f0" text-anchor="start" >Search for Fine Detail</text>
<rect x="47.5" y="658.5" width="355" height="302" fill="none" stroke="#f6c443" stroke-width="5"/>
<path d="M64.5 667.5 L70.5 673.5 L76.5 667.5" fill="none" stroke="#fff" stroke-width="2.2"/>
<text x="92.3" y="676.5" textLength="61" lengthAdjust="spacingAndGlyphs" font-size="18" font-weight="normal" fill="#f0f0f0" text-anchor="start" >Results</text>
<g fill="none" stroke="#fff" stroke-width="1.5"><rect x="57.5" y="701" width="15" height="15"/><line x1="61" y1="708.5" x2="69" y2="708.5"/><rect x="79.5" y="728.5" width="15" height="15"/><line x1="83" y1="736" x2="91" y2="736"/></g>
<g fill="none" stroke="#8a8a8a" stroke-width="1" stroke-dasharray="1.5 1.5"><path d="M63.5 717 V736 H79"/><path d="M86.5 745 V893.5 H117 M86.5 797.5 H117"/></g>
<rect x="170" y="703" width="17" height="17" rx="2" fill="none" stroke="#6e6e6e" stroke-width="2"/>
<path d="M217 699 L201.5 713.2 L209 712.8 L202.5 722.5 L217.5 708.8 L210 709.2 Z" fill="none" stroke="#fff" stroke-width="1.5" stroke-linejoin="miter"/>
<path d="M221.5 708 L227 714 L232.5 708" fill="none" stroke="#fff" stroke-width="1.8"/>
<g fill="none" stroke="#fff" stroke-width="2"><circle cx="253" cy="710" r="7"/><line x1="258" y1="715" x2="264" y2="721"/></g>
<g fill="none" stroke="#2b8ad6" stroke-width="2"><path d="M257 700 A10 10 0 0 1 267 706"/><path d="M246 720 A10 10 0 0 0 256 722"/></g><path d="M255 697 L259 703 L261 698 Z" fill="#2b8ad6"/><path d="M243 718 L248 724 L249 717 Z" fill="#2b8ad6"/>
<line x1="277" y1="706" x2="277" y2="718" stroke="#777" stroke-width="1.2"/>
<g fill="none" stroke="#fff" stroke-width="1.8"><path d="M287.5 703 H307.5 M290 703 L291 723 H304 L305 703"/><path d="M293 703 V699 H302 V703"/><path d="M294.5 707 V720 M297.5 707 V720 M300.5 707 V720"/></g>
<text x="114.9" y="740" textLength="259.7" lengthAdjust="spacingAndGlyphs" font-size="16.5" font-weight="normal" fill="#f0f0f0" text-anchor="start" >'Brighter Graphics - Floor Plan 1.pdf'</text>
<rect x="267" y="753.6" width="88" height="88.4" fill="#fff"/>
<rect x="135" y="789.0" width="18" height="18" rx="2" fill="none" stroke="#6e6e6e" stroke-width="2"/>
<text x="161.5" y="803.4" textLength="97.9" lengthAdjust="spacingAndGlyphs" font-size="16.5" font-weight="normal" fill="#f0f0f0" text-anchor="start" >(p.Floor Plan)</text>
<rect x="267" y="849.3" width="88" height="88.4" fill="#fff"/>
<rect x="135" y="884.7" width="18" height="18" rx="2" fill="none" stroke="#6e6e6e" stroke-width="2"/>
<text x="161.5" y="899.5" textLength="97.9" lengthAdjust="spacingAndGlyphs" font-size="16.5" font-weight="normal" fill="#f0f0f0" text-anchor="start" >(p.Floor Plan)</text>
<g fill="none" stroke="#222" stroke-width="1.3"><circle cx="311" cy="797.5" r="20.5"/><circle cx="311" cy="893.2" r="20.5"/><line x1="311" y1="818" x2="311" y2="842"/><line x1="311" y1="849.3" x2="311" y2="872.7"/></g>
<text x="302" y="804.3" textLength="18" lengthAdjust="spacingAndGlyphs" font-size="17" font-weight="bold" fill="#000" text-anchor="start" >03</text>
<text x="302" y="900" textLength="18" lengthAdjust="spacingAndGlyphs" font-size="17" font-weight="bold" fill="#000" text-anchor="start" >03</text>
<text x="49.5" y="1219.5" textLength="242.4" lengthAdjust="spacingAndGlyphs" font-size="16.5" font-weight="normal" fill="#f0f0f0" text-anchor="start" >2 Results found in 1 document(s)</text>
<text x="1.7" y="1254.3" textLength="45.3" lengthAdjust="spacingAndGlyphs" font-size="16.5" font-weight="normal" fill="#f0f0f0" text-anchor="start" >Ready</text>
<text x="682" y="108.5" textLength="225" lengthAdjust="spacingAndGlyphs" font-size="16.5" font-weight="normal" fill="#f0f0f0" text-anchor="start" >Brighter Graphics - Floor Plan 1</text>
<g stroke="#fff" stroke-width="1.8"><line x1="931" y1="96" x2="945" y2="110"/><line x1="945" y1="96" x2="931" y2="110"/></g>
<path d="M1925 100 L1931 106 L1937 100" fill="none" stroke="#fff" stroke-width="1.8"/>
<g fill="none" stroke-width="2"><rect x="683" y="1188" width="22" height="22" stroke="#666"/><line x1="683" y1="1191" x2="705" y2="1191" stroke="#666"/><g stroke="#fff"><rect x="731" y="1188" width="23" height="22"/><line x1="742.5" y1="1188" x2="742.5" y2="1210"/><line x1="731" y1="1191" x2="754" y2="1191"/><rect x="779" y="1188" width="23" height="22"/><line x1="779" y1="1199" x2="802" y2="1199"/><line x1="779" y1="1191" x2="802" y2="1191"/></g><line x1="818.5" y1="1187" x2="818.5" y2="1212" stroke="#777" stroke-width="1.2"/><g stroke="#fff" stroke-width="1.8"><path d="M836 1188 H849 L855 1194 V1211 H836 Z"/><path d="M849 1188 V1194 H855"/><path d="M845.5 1195 V1207 M839.5 1201 H851.5"/><path d="M843 1197.5 L845.5 1195 L848 1197.5 M843 1204.5 L845.5 1207 L848 1204.5 M842 1198.5 L839.5 1201 L842 1203.5 M849 1198.5 L851.5 1201 L849 1203.5"/><path d="M884 1187.5 H903 M884 1187 V1192 M903 1187 V1192"/><path d="M884 1211 V1196 H897 L903 1202 V1211"/><path d="M897 1196 V1202 H903"/><path d="M886 1207 H901 M889 1204.5 L886 1207 L889 1209.5 M898 1204.5 L901 1207 L898 1209.5"/></g></g>
<path d="M940 1212 C936 1210 932 1205 931.5 1201 C931 1198.5 933.5 1197.5 935.5 1199.5 L937 1201 L935.5 1192 C935 1189.5 938.5 1188.5 939 1191 L940.5 1198 L940.5 1189.5 C940.5 1187 944 1187 944 1189.5 V1198 L946 1190.5 C946.5 1188 950 1188.5 949.5 1191 L947.5 1199 L951 1194 C952 1192 955 1193.5 954 1195.5 L950 1205 C948.5 1209.5 946 1212 943 1212 Z" fill="none" stroke="#fff" stroke-width="1.8" stroke-linejoin="round"/>
<g fill="none" stroke="#fff" stroke-width="1.8" stroke-linejoin="round"><path d="M985 1187.5 L999 1201 H993 L997 1209.5 L994 1211 L990 1203 L985.5 1207 Z"/><path d="M1030 1187.5 H1038 M1034 1187.5 V1212 M1030 1212 H1038"/></g>
<text x="1038.5" y="1206.5" textLength="11" lengthAdjust="spacingAndGlyphs" font-size="15" font-weight="normal" fill="#fff" text-anchor="start" >A</text>
<g fill="none" stroke="#fff" stroke-width="2"><circle cx="1085" cy="1196" r="8.5"/><line x1="1091" y1="1202" x2="1101" y2="1213"/><path d="M1081 1195 H1089 M1085 1191 V1195" stroke-width="1.5"/><path d="M1081 1198.5 H1089" stroke-width="1.5"/></g>
<g fill="none" stroke="#666" stroke-width="1.8"><line x1="1130.5" y1="1191" x2="1130.5" y2="1208"/><path d="M1143 1191 L1134 1199.5 L1143 1208 Z"/><path d="M1190 1192 L1181 1199.5 L1190 1207 Z"/></g>
<rect x="1212" y="1188" width="341" height="24" rx="3" fill="none" stroke="#8a8a8a" stroke-width="2"/>
<text x="1317" y="1205.1" textLength="129" lengthAdjust="spacingAndGlyphs" font-size="16.5" font-weight="normal" fill="#f0f0f0" text-anchor="start" >Floor Plan (1 of 1)</text>
<path d="M1564 1196.5 L1569.5 1202 L1575 1196.5" fill="none" stroke="#fff" stroke-width="2"/>
<text x="1620" y="1205" textLength="149.5" lengthAdjust="spacingAndGlyphs" font-size="16.5" font-weight="normal" fill="#f0f0f0" text-anchor="start" >106.68 x 76.20 cm</text>
<text x="1797.3" y="1205" textLength="140.3" lengthAdjust="spacingAndGlyphs" font-size="16.5" font-weight="normal" fill="#f0f0f0" text-anchor="start" >9.525 cm = 30'-0"</text>
<g fill="none" stroke="#fff" stroke-width="1.9"><path d="M1224.7 1237 V1260 M1231.6 1237 V1260 M1238.5 1237 V1260 M1220 1241 H1243 M1220 1248 H1243 M1220 1255 H1243"/><path d="M1272.5 1236.5 V1260 M1280.2 1236.5 V1245 M1287 1236.5 V1243 M1268 1240.3 H1292 M1268 1247.3 H1279 M1268 1254.2 H1279"/><path d="M1282 1244.9 H1284.5 A7.8 7.8 0 0 1 1284.5 1260.5 H1282" stroke-width="1.7"/><path d="M1282 1249.5 H1284.5 A3.2 3.2 0 0 1 1284.5 1255.9 H1282" stroke-width="1.7"/><path d="M1327 1261 H1320 V1237 H1331 L1338 1244 V1246"/><path d="M1331 1237 V1244 H1338"/><path d="M1331 1244.9 H1333.5 A7.8 7.8 0 0 1 1333.5 1260.5 H1331" stroke-width="1.7"/><path d="M1331 1249.5 H1333.5 A3.2 3.2 0 0 1 1333.5 1255.9 H1331" stroke-width="1.7"/><g transform="translate(0 0)"><path d="M1369.5 1254.5 L1382.5 1241.5 M1373 1258 L1380 1251 M1382.5 1241.5 L1386 1238 L1391 1243 L1389 1245 M1369.5 1254.5 L1373 1258" stroke-width="1.7"/><path d="M1366.5 1259 L1369 1256.5 L1372 1259.5 L1369.5 1262 Z" fill="#fff" stroke="none"/></g><path d="M1379.5 1244.9 H1382.0 A7.8 7.8 0 0 1 1382.0 1260.5 H1379.5" stroke-width="1.7"/><path d="M1379.5 1249.5 H1382.0 A3.2 3.2 0 0 1 1382.0 1255.9 H1379.5" stroke-width="1.7"/><g transform="translate(47.5 0)"><path d="M1369.5 1254.5 L1382.5 1241.5 M1373 1258 L1380 1251 M1382.5 1241.5 L1386 1238 L1391 1243 L1389 1245 M1369.5 1254.5 L1373 1258" stroke-width="1.7"/><path d="M1366.5 1259 L1369 1256.5 L1372 1259.5 L1369.5 1262 Z" fill="#fff" stroke="none"/></g><rect x="1462.5" y="1237" width="24" height="23"/><path d="M1462.5 1240 H1486.5" stroke-width="1.2"/><path d="M1467 1247.3 H1482 M1478.5 1244 L1482 1247.3 L1478.5 1250.6 M1482 1253 H1467 M1470.5 1249.7 L1467 1253 L1470.5 1256.3" stroke-width="1.6"/><path d="M1502 1246 L1507.7 1251.7 L1513.4 1246"/></g>
<g fill="none" stroke="#2b8ad6" stroke-width="2.2"><path d="M1437 1249.5 A5.6 5.6 0 1 1 1427.5 1251"/></g><path d="M1433 1246 L1439.5 1246.5 L1437.5 1252.5 Z" fill="#2b8ad6"/>
<text x="1547.4" y="1254.7" textLength="126.2" lengthAdjust="spacingAndGlyphs" font-size="16.5" font-weight="normal" fill="#f0f0f0" text-anchor="start" >9.525 cm = 30'-0"</text>
<text x="1705.8" y="1254.7" textLength="134.2" lengthAdjust="spacingAndGlyphs" font-size="16.5" font-weight="normal" fill="#f0f0f0" text-anchor="start" >106.68 x 76.20 cm</text>
<text x="1890" y="1254.7" textLength="93" lengthAdjust="spacingAndGlyphs" font-size="16.5" font-weight="normal" fill="#f0f0f0" text-anchor="start" >(2.50, 50.76)</text>
<g fill="#aaa"><rect x="1957.0" y="85" width="1.6" height="1.6"/><rect x="1960.4" y="85" width="1.6" height="1.6"/><rect x="1963.8" y="85" width="1.6" height="1.6"/><rect x="1967.2" y="85" width="1.6" height="1.6"/><rect x="1970.6" y="85" width="1.6" height="1.6"/><rect x="1974.0" y="85" width="1.6" height="1.6"/><rect x="1977.4" y="85" width="1.6" height="1.6"/><rect x="1980.8" y="85" width="1.6" height="1.6"/><rect x="1984.2" y="85" width="1.6" height="1.6"/><rect x="1987.6" y="85" width="1.6" height="1.6"/><rect x="1991.0" y="85" width="1.6" height="1.6"/><rect x="1994.4" y="85" width="1.6" height="1.6"/><rect x="1997.8" y="85" width="1.6" height="1.6"/><rect x="2001.2" y="85" width="1.6" height="1.6"/></g>
<g fill="#aaa"><rect x="1957.0" y="530" width="1.6" height="1.6"/><rect x="1960.4" y="530" width="1.6" height="1.6"/><rect x="1963.8" y="530" width="1.6" height="1.6"/><rect x="1967.2" y="530" width="1.6" height="1.6"/><rect x="1970.6" y="530" width="1.6" height="1.6"/><rect x="1974.0" y="530" width="1.6" height="1.6"/><rect x="1977.4" y="530" width="1.6" height="1.6"/><rect x="1980.8" y="530" width="1.6" height="1.6"/><rect x="1984.2" y="530" width="1.6" height="1.6"/><rect x="1987.6" y="530" width="1.6" height="1.6"/><rect x="1991.0" y="530" width="1.6" height="1.6"/><rect x="1994.4" y="530" width="1.6" height="1.6"/></g>
<g fill="none" stroke="#fff" stroke-width="2"><rect x="1970" y="103" width="23" height="23"/><rect x="1970" y="248" width="18.5" height="9.6" stroke-width="1.8"/><path d="M1988 257.6 L1992.4 262.3 L1987.7 268.2" stroke-width="1.6"/><path d="M1969 271 A3.1 3.1 0 0 1 1975.2 271 A3.1 3.1 0 0 1 1981.4 271 A3.1 3.1 0 0 1 1987.6 271 A3.1 3.1 0 0 1 1993.8 271" stroke-width="1.6"/><path d="M1981.3 298.8 A3.9 3.9 0 0 1 1987.8 301.5 A3.9 3.9 0 0 1 1990.5 308.0 A3.9 3.9 0 0 1 1987.8 314.5 A3.9 3.9 0 0 1 1981.3 317.2 A3.9 3.9 0 0 1 1974.8 314.5 A3.9 3.9 0 0 1 1972.1 308.0 A3.9 3.9 0 0 1 1974.8 301.5 A3.9 3.9 0 0 1 1981.3 298.8 Z" stroke-width="1.8"/><rect x="1970" y="345" width="18.5" height="9.4" stroke-width="1.8"/><path d="M1988 354.4 L1992.4 359.7 L1985 367" stroke-width="1.6"/><path d="M1968 413 H1990 M1968 417 H1990" stroke-width="1.6"/><path d="M1969 410 V404 H1976 V399 C1972 396 1973 390 1979 390 C1985 390 1986 396 1982 399 V404 H1989 V410 Z" stroke-width="1.6"/><path d="M1994 401 L1999 406 L2004 401" stroke-width="1.6"/><rect x="1970" y="441" width="23" height="21"/><path d="M1970 458 L1978 450 L1984 455 L1987 452 L1993 458" stroke-width="1.6"/><circle cx="1976.5" cy="447" r="1.2" fill="#fff"/><path d="M1969 487 V496 M1964 491 H1974"/><path d="M1974 494 H1993 V514 H1974 V497" stroke-dasharray="3 2.5"/><line x1="1966" y1="571" x2="1988" y2="548"/><line x1="1966" y1="620" x2="1985" y2="600"/><path d="M1966 670 C1966 657 1975 647 1988 645"/><path d="M1966 717 L1970 703 L1977 708 L1982 693 L1986 700 L1989 692" stroke-width="1.8"/><path d="M1966 744 V757 M1989 744 V757 M1967 751 H1988" stroke-width="1.8"/><rect x="1965" y="793" width="24" height="18"/><ellipse cx="1977" cy="850.3" rx="12" ry="10"/><path d="M1965 887 H1989 L1978 898.5 L1989 911 H1965 Z" stroke-width="1.8"/></g>
<path d="M1982.5 369 L1983.5 362.5 L1989 367.5 Z" fill="#fff"/><path d="M1989 597 L1979 601 L1985 607 Z" fill="#fff"/><path d="M1969 754 L1966 751 L1969 748 M1986 754 L1989 751 L1986 748" fill="none" stroke="#fff" stroke-width="1.5"/>
<text x="1974.5" y="121" textLength="14" lengthAdjust="spacingAndGlyphs" font-size="17" font-weight="normal" fill="#fff" text-anchor="start" >A</text>
<g fill="none" stroke="#d2b63a" stroke-width="1.7" stroke-linejoin="round"><path d="M1985 151 L1977.5 158.5"/><path d="M1977.5 158.5 L1991.5 169 L1986 174 L1975 164.5 Z"/><path d="M1976 164 L1983 171"/></g><path d="M1977 166 L1969.5 175.5 H1981 L1984 172.5" fill="none" stroke="#fff" stroke-width="1.7"/>
<g fill="none" stroke="#2b8ad6" stroke-width="2" stroke-linejoin="round"><path d="M1985 199 L1976 210 L1973 216 L1978 218.5 L1984 216 L1993.5 208.5"/><path d="M1976 210 L1983 216"/></g><path d="M1972.5 215.5 L1976.5 219 L1973 223 L1969 220 Z" fill="#fff"/>
<g fill="none" stroke="#8e6fc9" stroke-width="1.6"><path d="M1964.5 959.7 V935.7 H1991"/><path d="M1968.0 935.7 v-3"/><path d="M1972.5 935.7 v-3"/><path d="M1977.0 935.7 v-3"/><path d="M1981.5 935.7 v-3"/><path d="M1986.0 935.7 v-3"/><path d="M1990.5 935.7 v-3"/><path d="M1964.5 939.7 h-3"/><path d="M1964.5 944.2 h-3"/><path d="M1964.5 948.7 h-3"/><path d="M1964.5 953.2 h-3"/><path d="M1964.5 957.7 h-3"/></g>
<g fill="none" stroke="#8e6fc9" stroke-width="1.6"><path d="M1964.5 1005.8 V981.8 H1991"/><path d="M1968.0 981.8 v-3"/><path d="M1972.5 981.8 v-3"/><path d="M1977.0 981.8 v-3"/><path d="M1981.5 981.8 v-3"/><path d="M1986.0 981.8 v-3"/><path d="M1990.5 981.8 v-3"/><path d="M1964.5 985.8 h-3"/><path d="M1964.5 990.3 h-3"/><path d="M1964.5 994.8 h-3"/><path d="M1964.5 999.3 h-3"/><path d="M1964.5 1003.8 h-3"/></g>
<g fill="none" stroke="#8e6fc9" stroke-width="1.6"><path d="M1964.5 1055.3 V1031.3 H1991"/><path d="M1968.0 1031.3 v-3"/><path d="M1972.5 1031.3 v-3"/><path d="M1977.0 1031.3 v-3"/><path d="M1981.5 1031.3 v-3"/><path d="M1986.0 1031.3 v-3"/><path d="M1990.5 1031.3 v-3"/><path d="M1964.5 1035.3 h-3"/><path d="M1964.5 1039.8 h-3"/><path d="M1964.5 1044.3 h-3"/><path d="M1964.5 1048.8 h-3"/><path d="M1964.5 1053.3 h-3"/></g>
<g fill="none" stroke="#8e6fc9" stroke-width="1.6"><path d="M1964.5 1106 V1082 H1991"/><path d="M1968.0 1082 v-3"/><path d="M1972.5 1082 v-3"/><path d="M1977.0 1082 v-3"/><path d="M1981.5 1082 v-3"/><path d="M1986.0 1082 v-3"/><path d="M1990.5 1082 v-3"/><path d="M1964.5 1086.0 h-3"/><path d="M1964.5 1090.5 h-3"/><path d="M1964.5 1095.0 h-3"/><path d="M1964.5 1099.5 h-3"/><path d="M1964.5 1104.0 h-3"/></g>
<g fill="none" stroke="#fff" stroke-width="1.6"><path d="M1971 959.2 V949.3 L1979 942 H1988.3 V959.2 Z"/><path d="M1970.6 1009 V997.4 L1980.3 988.3 H1990 V1009 Z" stroke-width="1.8"/><path d="M1970.5 1045.6 H1989 M1970 1038 V1053 M1989.5 1038 V1053" stroke-width="1.8"/><path d="M1968 1105 L1990 1092 M1975 1107 L1978 1088 M1979.5 1107 L1982.5 1088 M1984 1107 L1987 1088 M1988.5 1107 L1991.5 1088"/></g>
<g fill="#fff"><rect x="1969" y="947.3" width="4" height="4"/><rect x="1977" y="940" width="4" height="4"/><rect x="1986.3" y="940" width="4" height="4"/><rect x="1986.3" y="957.2" width="4" height="4"/><rect x="1969" y="957.2" width="4" height="4"/></g>
<path d="M1974 1045.6 L1970 1043 V1048.2 Z M1985.5 1045.6 L1989.5 1043 V1048.2 Z" fill="#fff"/>
</svg>
</body></html>
